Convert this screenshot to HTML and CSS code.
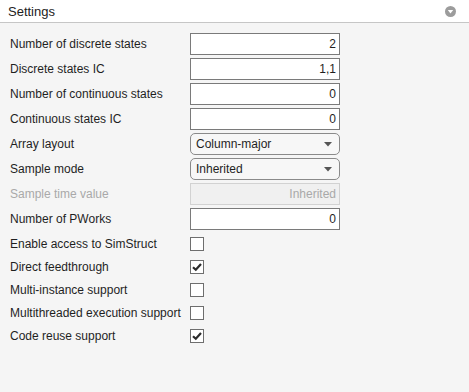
FILE: index.html
```html
<!DOCTYPE html>
<html>
<head>
<meta charset="utf-8">
<link rel="stylesheet" href="styles.css">
</head>
<body>
<div class="panel">
  <div class="header">
    <span class="title">Settings</span>
    <svg class="collapse" width="11" height="11" viewBox="0 0 11 11"><circle cx="5.5" cy="5.5" r="5.5" fill="#9c9c9c"/><path d="M2.8 4 L8.2 4 L5.5 7.6 Z" fill="#fff"/></svg>
  </div>
  <div class="form">
    <div class="label">Number of discrete states</div>
    <div class="field">2</div>
    <div class="label">Discrete states IC</div>
    <div class="field">1,1</div>
    <div class="label">Number of continuous states</div>
    <div class="field">0</div>
    <div class="label">Continuous states IC</div>
    <div class="field">0</div>
    <div class="label">Array layout</div>
    <div class="select"><span>Column-major</span><svg width="8" height="5" viewBox="0 0 8 5"><path d="M0 0 L8 0 L4 4.5 Z" fill="#555"/></svg></div>
    <div class="label">Sample mode</div>
    <div class="select"><span>Inherited</span><svg width="8" height="5" viewBox="0 0 8 5"><path d="M0 0 L8 0 L4 4.5 Z" fill="#555"/></svg></div>
    <div class="label disabled">Sample time value</div>
    <div class="field field-disabled">Inherited</div>
    <div class="label">Number of PWorks</div>
    <div class="field">0</div>
    <div class="label cbl first">Enable access to SimStruct</div>
    <div class="cb-cell first"><span class="cb"></span></div>
    <div class="label cbl">Direct feedthrough</div>
    <div class="cb-cell"><span class="cb"><svg width="12" height="12" viewBox="0 0 12 12"><path d="M2 6.2 L4.8 8.8 L10 3" fill="none" stroke="#2b2b2b" stroke-width="2.2"/></svg></span></div>
    <div class="label cbl">Multi-instance support</div>
    <div class="cb-cell"><span class="cb"></span></div>
    <div class="label cbl">Multithreaded execution support</div>
    <div class="cb-cell"><span class="cb"></span></div>
    <div class="label cbl">Code reuse support</div>
    <div class="cb-cell"><span class="cb"><svg width="12" height="12" viewBox="0 0 12 12"><path d="M2 6.2 L4.8 8.8 L10 3" fill="none" stroke="#2b2b2b" stroke-width="2.2"/></svg></span></div>
  </div>
</div>
</body>
</html>
```
FILE: styles.css
```css
html, body {
  margin: 0;
  padding: 0;
  background: #f5f5f5;
  font-family: "Liberation Sans", Arial, sans-serif;
  color: #1f1f1f;
}
.panel {
  width: 469px;
  height: 392px;
  background: #f5f5f5;
}
.header {
  height: 22px;
  background: #fff;
  border-bottom: 1px solid #c6c6c6;
  display: flex;
  align-items: center;
  justify-content: space-between;
  padding: 0 13px 0 8px;
}
.title {
  font-size: 13px;
  color: #222;
}
.collapse {
  display: block;
}
.form {
  display: grid;
  grid-template-columns: 180px 150px;
  row-gap: 3px;
  padding: 10px 0 0 10px;
  font-size: 12px;
}
.label {
  height: 22px;
  display: flex;
  align-items: center;
  white-space: nowrap;
}
.label.disabled {
  color: #a9a9a9;
}
.field {
  height: 22px;
  box-sizing: border-box;
  border: 1px solid #7a7a7a;
  background: #fff;
  text-align: right;
  padding: 0 3px;
  line-height: 20px;
  font-size: 12px;
}
.field-disabled {
  border-color: #d2d2d2;
  background: #f0f0f0;
  color: #a9a9a9;
}
.select {
  height: 22px;
  box-sizing: border-box;
  border: 1px solid #8a8a8a;
  border-radius: 5px;
  background: #f7f7f7;
  display: flex;
  align-items: center;
  justify-content: space-between;
  padding: 0 7px 0 5px;
}
.select svg {
  display: block;
}
.cb-cell {
  height: 20px;
  display: flex;
  align-items: center;
}
.cbl {
  height: 20px;
}
.cbl.first, .cb-cell.first {
  height: 21px;
}
.cb {
  width: 14px;
  height: 14px;
  box-sizing: border-box;
  border: 1px solid #6e6e6e;
  background: #fff;
  display: flex;
  align-items: center;
  justify-content: center;
}
.cb svg {
  display: block;
}
```
